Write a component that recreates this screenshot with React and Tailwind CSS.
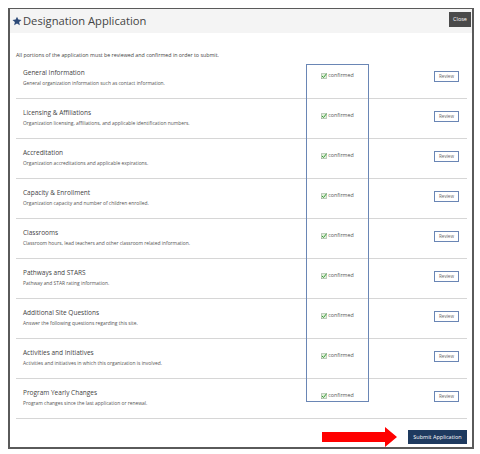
import React from "react";

const rows = [
  ["General Information", "General organization information such as contact information."],
  ["Licensing & Affiliations", "Organization licensing, affiliations, and applicable identification numbers."],
  ["Accreditation", "Organization accreditations and applicable expirations."],
  ["Capacity & Enrollment", "Organization capacity and number of children enrolled."],
  ["Classrooms", "Classroom hours, lead teachers and other classroom related information."],
  ["Pathways and STARS", "Pathway and STAR rating information."],
  ["Additional Site Questions", "Answer the following questions regarding this site."],
  ["Activities and Initiatives", "Activities and initiatives in which this organization is involved."],
  ["Program Yearly Changes", "Program changes since the last application or renewal."],
];

function Check() {
  return (
    <svg width="6" height="6" viewBox="0 0 12 12" className="shrink-0">
      <rect x="0.5" y="1.5" width="10" height="10" fill="#dff0d8" stroke="#8aa08a" strokeWidth="1" />
      <path d="M2.5 6.5 L5 9 L11 1.5" fill="none" stroke="#3c9a3c" strokeWidth="2" strokeLinecap="round" strokeLinejoin="round" />
    </svg>
  );
}

function Star() {
  return (
    <svg width="10" height="10" viewBox="0 0 24 24" className="shrink-0">
      <path d="M12 1.5l3.2 7.1 7.7.7-5.8 5.1 1.7 7.6L12 18l-6.8 4 1.7-7.6L1.1 9.3l7.7-.7z" fill="#2d4a78" />
    </svg>
  );
}

export default function App() {
  return (
    <div className="w-[480px] h-[454px] bg-white pt-[8px] pl-[8px]" style={{ fontFamily: '"Open Sans", "Noto Sans", sans-serif' }}>
      <div className="w-[466px] h-[441px] border-l-2 border-r-2 border-b-2 border-t border-[#5a5a5a] flex flex-col overflow-hidden">
        <div className="h-[24px] shrink-0 bg-[#f4f4f4] flex items-start justify-between pl-[2px] pr-[1px]">
          <div className="flex items-center gap-[1px] pt-[4px]">
            <Star />
            <span className="text-[11.2px] leading-[15px] text-[#444]">Designation Application</span>
          </div>
          <div className="mt-[3px] h-[15px] w-[22px] bg-[#4a4a4a] text-white text-[5.5px] flex items-center justify-center">Close</div>
        </div>
        <div className="pl-[6px] pr-[5px]">
          <div className="mt-[18px] h-[8px] leading-[8px] text-[5.3px] text-[#444]">
            All portions of the application must be reviewed and confirmed in order to submit.
          </div>
          <div className="relative">
            {rows.map(([t, d]) => (
              <div key={t} className="h-[40px] border-b border-[#d6d6d6] grid grid-cols-[290px_63px_1fr]">
                <div className="pl-[7px] pt-[9px]">
                  <div className="text-[6.5px] leading-[9px] font-medium text-[#3f3f3f]">{t}</div>
                  <div className="mt-[3px] text-[4.9px] leading-[7px] text-[#555]">{d}</div>
                </div>
                <div className="pt-[13px] flex items-start justify-center">
                  <div className="flex items-center gap-[1px] h-[7px]">
                    <Check />
                    <span className="text-[5.3px] leading-[7px] text-[#555]">confirmed</span>
                  </div>
                </div>
                <div className="pt-[12px] flex justify-end pr-[8px]">
                  <div className="h-[11px] w-[25px] border border-[#6a86b5] text-[4.6px] text-[#666] flex items-center justify-center">Review</div>
                </div>
              </div>
            ))}
            <div className="absolute left-[290px] top-[5px] w-[63px] h-[338px] border-[1.5px] border-[#6a86b5]" />
          </div>
          <div className="pt-[8px] flex justify-end items-center gap-[11px]">
            <svg width="75" height="20" viewBox="0 0 75 20" className="shrink-0">
              <path d="M0 5 L63 5 L63 0 L75 10 L63 20 L63 15 L0 15 Z" fill="#ff0000" />
            </svg>
            <div className="h-[14px] w-[59px] bg-[#1e3a5f] text-white text-[5.5px] flex items-center justify-center">Submit Application</div>
          </div>
        </div>
      </div>
    </div>
  );
}
